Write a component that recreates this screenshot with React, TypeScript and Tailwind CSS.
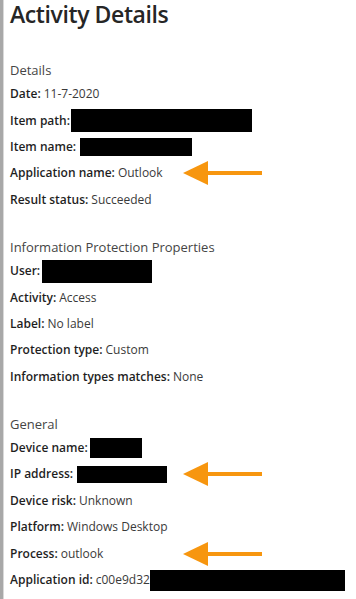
import React from "react";

interface Field {
  label: string;
  value?: string;
  box?: { w: number; h: number; ml: number };
  arrow?: boolean;
}

interface Section {
  title: string;
  fields: Field[];
}

const sections: Section[] = [
  {
    title: "Details",
    fields: [
      { label: "Date:", value: "11-7-2020" },
      { label: "Item path:", box: { w: 181, h: 23, ml: 1 } },
      { label: "Item name:", box: { w: 112, h: 18, ml: 4 } },
      { label: "Application name:", value: "Outlook", arrow: true },
      { label: "Result status:", value: "Succeeded" },
    ],
  },
  {
    title: "Information Protection Properties",
    fields: [
      { label: "User:", box: { w: 110, h: 23, ml: 2 } },
      { label: "Activity:", value: "Access" },
      { label: "Label:", value: "No label" },
      { label: "Protection type:", value: "Custom" },
      { label: "Information types matches:", value: "None" },
    ],
  },
  {
    title: "General",
    fields: [
      { label: "Device name:", box: { w: 52, h: 20, ml: 2 } },
      { label: "IP address:", box: { w: 90, h: 17, ml: 4 }, arrow: true },
      { label: "Device risk:", value: "Unknown" },
      { label: "Platform:", value: "Windows Desktop" },
      { label: "Process:", value: "outlook", arrow: true },
      { label: "Application id:", value: "c00e9d32", box: { w: 195, h: 21, ml: 0 } },
    ],
  },
];

function Arrow() {
  return (
    <svg
      className="absolute left-[173px] top-1/2 -translate-y-1/2"
      width="80"
      height="26"
      viewBox="0 0 80 26"
    >
      <polygon points="0,13 25,1 25,25" fill="#f7960f" />
      <rect x="22" y="11" width="57" height="4" fill="#f7960f" />
    </svg>
  );
}

function Row({ field }: { field: Field }) {
  return (
    <div className="relative flex h-[26.4px] items-center whitespace-nowrap text-[12px]">
      <span className="font-semibold text-[#1f1f1f]">{field.label}</span>
      {field.value && <span className="ml-[3px] text-[#3a3a3a]">{field.value}</span>}
      {field.box && (
        <span
          className="inline-block bg-black"
          style={{ width: field.box.w, height: field.box.h, marginLeft: field.box.ml }}
        />
      )}
      {field.arrow && <Arrow />}
    </div>
  );
}

export default function App() {
  return (
    <div
      className="flex h-[599px] w-[356px] overflow-hidden bg-white"
      style={{ fontFamily: '"Open Sans", "Noto Sans", sans-serif' }}
    >
      <div className="w-[3px] shrink-0 bg-[#a8a8a8]" />
      <div className="w-px shrink-0 bg-[#d9d9d9]" />
      <div className="flex-1 pl-[6px]">
        <h1 className="text-[23px] font-semibold leading-[28px] tracking-[-0.4px] text-[#262626]">
          Activity Details
        </h1>
        <div className="mt-[31px] flex flex-col gap-[23px]">
          {sections.map((s) => (
            <section key={s.title}>
              <h2 className="h-[22px] text-[13px] leading-[22px] text-[#454545]">{s.title}</h2>
              {s.fields.map((f) => (
                <Row key={f.label} field={f} />
              ))}
            </section>
          ))}
        </div>
      </div>
    </div>
  );
}
